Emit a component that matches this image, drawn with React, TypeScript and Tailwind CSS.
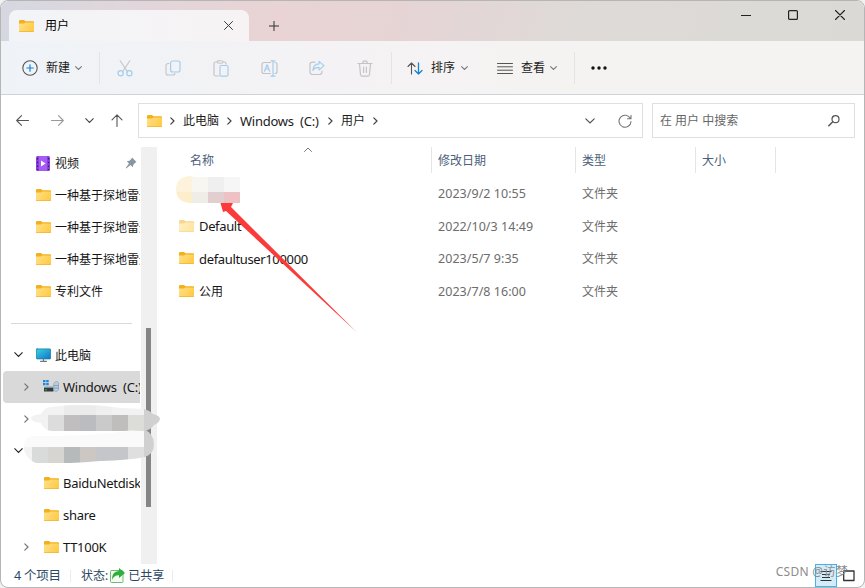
import React, { FunctionComponent, ReactNode } from "react";

interface IconProps {
  w: number;
  h: number;
  className?: string;
  children: ReactNode;
}

const Icon: FunctionComponent<IconProps> = ({ w, h, className, children }) => (
  <svg
    width={w}
    height={h}
    viewBox={`0 0 ${w} ${h}`}
    fill="none"
    strokeLinecap="round"
    strokeLinejoin="round"
    className={`shrink-0 ${className || ""}`}
  >
    {children}
  </svg>
);

const Folder = ({ className }: { className?: string }) => (
  <Icon w={15} h={12} className={className}>
    <path d="M0 1.2Q0 0 1.2 0H5l1.5 1.3H14q1 0 1 1V5H0z" fill="#f3b01c" />
    <path
      d="M0 3.6h5l1.4-1.2H14q1 0 1 1V11q0 1-1 1H1q-1 0-1-1z"
      fill="url(#folderFill)"
    />
    <path d="M.5 11.5h14" stroke="#efb736" strokeWidth=".8" />
    <defs>
      <linearGradient id="folderFill" x1="0" y1="2" x2="15" y2="12" gradientUnits="userSpaceOnUse">
        <stop stopColor="#ffe08a" />
        <stop offset="1" stopColor="#ffc93f" />
      </linearGradient>
    </defs>
  </Icon>
);

const ChevronDown = ({ w = 7, className }: { w?: number; className?: string }) => (
  <svg
    width={w}
    height={w * 0.6}
    viewBox="0 0 10 6"
    fill="none"
    stroke="currentColor"
    strokeWidth={w > 8 ? 1.2 : 1.5}
    strokeLinecap="round"
    className={`shrink-0 ${className || ""}`}
  >
    <path d="M.8.8 5 5 9.2.8" />
  </svg>
);

const ChevronRight = ({ className }: { className?: string }) => (
  <Icon w={5} h={8} className={className}>
    <path d="M.8.8 4 4 .8 7.2" stroke="currentColor" strokeWidth="1.2" />
  </Icon>
);

const TitleBar = () => (
  <div className="flex h-10 shrink-0 bg-[linear-gradient(100deg,#d5d8e1_0%,#e0d6db_14%,#e9d3d4_32%,#e6d4d5_46%,#dddad8_68%,#dbd9d6_100%)]">
    <div className="mt-[9px] ml-2 flex w-[240px] items-center rounded-t-lg bg-[linear-gradient(90deg,#f2f4f7,#f7f3f4)] pl-2.5 text-black">
      <Folder />
      <span className="ml-[11px]">用户</span>
      <Icon w={9} h={9} className="mr-4 ml-auto">
        <path d="M.5.5l8 8M8.5.5l-8 8" stroke="#3c3c3c" />
      </Icon>
    </div>
    <Icon w={10} h={10} className="mt-5 ml-5">
      <path d="M5 .3v9.4M.3 5h9.4" stroke="#333" />
    </Icon>
    <div className="mt-[9px] mr-[19px] ml-auto flex gap-[37px]">
      <Icon w={10} h={10}>
        <path d="M0 5.500h10" stroke="#222" />
      </Icon>
      <Icon w={10} h={10}>
        <rect x=".6" y=".6" width="8.8" height="8.8" rx="1" stroke="#222" strokeWidth="1.2" />
      </Icon>
      <Icon w={10} h={10}>
        <path d="M.5.5l9 9M9.5.5l-9 9" stroke="#222" strokeWidth="1.1" />
      </Icon>
    </div>
  </div>
);

const Divider = () => <div className="h-8 w-px shrink-0 bg-[#e4e4e5]" />;

const GRAY = "#c2c4c6";
const BLUE = "#a3cdee";

const fileActions: ReactNode[] = [
  <Icon w={16} h={17}>
    <path d="M3.2.8 10.6 12M12.8.8 5.4 12" stroke={GRAY} strokeWidth="1.1" />
    <circle cx="3.6" cy="13.2" r="2.6" stroke={BLUE} strokeWidth="1.2" />
    <circle cx="12.4" cy="13.2" r="2.6" stroke={BLUE} strokeWidth="1.2" />
  </Icon>,
  <Icon w={16} h={16}>
    <path d="M4 3.5H3a2 2 0 0 0-2 2V13a2 2 0 0 0 2 2h5a2 2 0 0 0 2-1.5" stroke={GRAY} strokeWidth="1.1" />
    <rect x="5.6" y="1" width="9.4" height="11" rx="2" stroke={BLUE} strokeWidth="1.2" />
  </Icon>,
  <Icon w={16} h={17}>
    <path d="M4 2H2.5Q1 2 1 3.5v11Q1 16 2.5 16H6M10 2h1.5Q13 2 13 3.5V4" stroke={GRAY} strokeWidth="1.2" />
    <rect x="4" y=".8" width="6" height="2.4" rx="1.2" stroke={GRAY} />
    <rect x="7" y="5.5" width="8" height="10.7" rx="1.5" stroke={BLUE} strokeWidth="1.2" />
  </Icon>,
  <Icon w={17} h={17}>
    <path d="M9.5 2.5H3a2 2 0 0 0-2 2v7a2 2 0 0 0 2 2h6.5M14 2.5a2 2 0 0 1 2 2v7a2 2 0 0 1-2 2" stroke={GRAY} strokeWidth="1.2" />
    <path d="M10 .8h4M12 .8v15.4M10 16.2h4M3.5 11.2 6.1 4.8l2.6 6.4M4.4 9h3.4" stroke={BLUE} strokeWidth="1.2" />
  </Icon>,
  <Icon w={16} h={16}>
    <path d="M6 2.2H3.5A2.5 2.5 0 0 0 1 4.7V12a2.5 2.5 0 0 0 2.5 2.5h7A2.5 2.5 0 0 0 13 12v-1" stroke={GRAY} strokeWidth="1.2" />
    <path d="M10 1.3 15 5.7 10 10V7.4C7 7.4 5.2 8.3 3.8 10.5 4.2 6.3 6.5 4 10 3.9z" stroke={BLUE} strokeWidth="1.1" />
  </Icon>,
  <Icon w={16} h={17}>
    <path d="M1 3.5h14M5.8 3a2.2 2.2 0 0 1 4.4 0M2.5 3.7l1 10.8q.2 1.700 1.800 1.700h5.400q1.600 0 1.800-1.700l1-10.800M6.600 7v5.500M9.400 7v5.500" stroke={GRAY} strokeWidth="1.2" />
  </Icon>,
];

const Toolbar = () => (
  <div className="flex h-[54px] shrink-0 items-center border-b border-[#cfd3d7] bg-[linear-gradient(90deg,#eff3f7,#f4f2f4_38%,#f5f3f2_60%,#f4f3f1)] pt-px text-[#1c1c1c]">
    <Icon w={16} h={16} className="ml-[21px]">
      <circle cx="8" cy="8" r="7.2" stroke="#555" strokeWidth="1.1" />
      <path d="M8 4.8v6.4M4.800 8h6.400" stroke="#1683d8" strokeWidth="1.2" />
    </Icon>
    <span className="ml-2">新建</span>
    <ChevronDown className="mr-[17px] ml-[5px] text-[#777]" />
    <Divider />
    <div className="ml-px flex">
      {fileActions.map((icon, i) => (
        <div key={i} className="flex w-12 justify-center">
          {icon}
        </div>
      ))}
    </div>
    <div className="w-0.5" />
    <Divider />
    <Icon w={16} h={13} className="ml-[15px]">
      <path d="M4.5 12V1M1 4.5 4.5 1 8 4.5" stroke="#555" strokeWidth="1.1" />
      <path d="M11.5 1v11M8 8.5l3.5 3.5L15 8.5" stroke="#1683d8" strokeWidth="1.3" />
    </Icon>
    <span className="ml-2">排序</span>
    <ChevronDown className="mr-[29px] ml-1.5 text-[#777]" />
    <Icon w={16} h={11}>
      <path d="M.5.5h15M.5 3.800h15M.5 7.200h15M.5 10.500h15" stroke="#555" />
    </Icon>
    <span className="ml-2">查看</span>
    <ChevronDown className="mr-[17px] ml-[5px] text-[#777]" />
    <Divider />
    <Icon w={16} h={4} className="ml-4">
      <circle cx="2" cy="2" r="1.7" fill="#111" />
      <circle cx="8" cy="2" r="1.7" fill="#111" />
      <circle cx="14" cy="2" r="1.7" fill="#111" />
    </Icon>
  </div>
);

const NavigationBar = () => (
  <div className="flex h-[51px] shrink-0 items-center text-[#1c1c1c]">
    <Icon w={13} h={11} className="ml-[15px]">
      <path d="M12.5 5.500H.8M5.500.7.7 5.500l4.800 4.800" stroke="#555" strokeWidth="1.1" />
    </Icon>
    <Icon w={13} h={11} className="ml-[22px]">
      <path d="M.5 5.500h11.700M7.500.7l4.800 4.800-4.800 4.800" stroke="#999" strokeWidth="1.1" />
    </Icon>
    <ChevronDown w={9} className="ml-[21px] text-[#444]" />
    <Icon w={12} h={13} className="ml-[17px]">
      <path d="M6 12.500V.8M1 5.800l5-5 5 5" stroke="#555" strokeWidth="1.1" />
    </Icon>
    <div className="ml-[15px] flex h-[35px] w-[505px] items-center border border-[#dfdfdf] pl-2">
      <Folder />
      <ChevronRight className="ml-2 text-[#444]" />
      <span className="ml-2">此电脑</span>
      <ChevronRight className="ml-2 text-[#444]" />
      <span className="ml-2 w-20 text-[13px] tracking-[-0.25px] whitespace-pre">Windows  (C:)</span>
      <ChevronRight className="ml-2 text-[#444]" />
      <span className="ml-2">用户</span>
      <ChevronRight className="ml-2 text-[#444]" />
      <ChevronDown w={10} className="ml-auto text-[#555]" />
      <Icon w={14} h={14} className="mr-2.5 ml-[23px]">
        <path d="M12.4 4.600A6 6 0 1 0 13 7.500M13 1.200v3.600H9.400" stroke="#777" strokeWidth="1.1" />
      </Icon>
    </div>
    <div className="ml-[9px] flex h-[35px] w-[203px] items-center border border-[#dfdfdf] pl-[7px] text-[#666]">
      <span className="pt-px">在 用户 中搜索</span>
      <Icon w={12} h={12} className="mr-3.5 ml-auto">
        <circle cx="7.5" cy="4.200" r="3.500" stroke="#555" strokeWidth="1.2" />
        <path d="M4.8 6.800.8 10.800" stroke="#555" strokeWidth="1.500" />
      </Icon>
    </div>
  </div>
);

const VideoIcon = () => (
  <Icon w={14} h={15}>
    <rect width="14" height="15" rx="1.5" fill="#8b3fe0" />
    <rect x="3" width="8" height="15" fill="#a45cf2" />
    <path d="M5 4.500v6l4.500-3z" fill="#fff" />
    <path d="M1.5 2v12M12.5 2v12" stroke="#3d1673" strokeDasharray="1.5 2.2" strokeLinecap="butt" strokeWidth="1.2" />
  </Icon>
);

const PinIcon = () => (
  <Icon w={12} h={12} className="mr-[3px] ml-auto">
    <path d="M7 .5 11.500 5 10.200 5.800 8.300 7.700 7.900 10.300 5.500 8 1.200 11.400.7 10.900 4 6.600 1.800 4.200 4.500 3.800 6.300 1.900z" fill="#8795a1" />
  </Icon>
);

const ComputerIcon = () => (
  <Icon w={15} h={14}>
    <rect x=".4" y=".9" width="14.2" height="10" rx=".7" fill="url(#screen)" stroke="#1a7ca5" strokeWidth=".8" />
    <path d="M7.5 11v2M4.500 13.300h6" stroke="#6b7780" strokeWidth="1.2" />
    <defs>
      <linearGradient id="screen" x1="0" y1="0" x2="1" y2="1">
        <stop stopColor="#36d5e6" />
        <stop offset="1" stopColor="#1272c2" />
      </linearGradient>
    </defs>
  </Icon>
);

const DriveIcon = () => (
  <Icon w={16} h={14} className="-mt-0.5">
    <path d="M0 1h2.500v2.300H0zM3.200 1h2.500v2.300H3.200zM0 4h2.500v2.300H0zM3.200 4h2.500v2.300H3.200z" fill="#1d88dd" />
    <path d="M1 8.500h9.500v4H1z" fill="#333b40" />
    <path d="M2 8h8" stroke="#8f999f" />
    <circle cx="3" cy="10.8" r=".8" fill="#3ec34b" />
    <path d="M11 4.200Q13 1 15.500 3.500V11q-2.500 3-4.500.5z" fill="#b9cfde" stroke="#8ba9bf" strokeWidth=".8" />
    <path d="M11 6.500h4.500M11 9h4.500" stroke="#7498b4" strokeWidth=".8" />
  </Icon>
);

const quickAccess = ["一种基于探地雷达", "一种基于探地雷达", "一种基于探地雷达", "专利文件"];

const Mosaic = () => (
  <svg className="absolute top-[257px] left-[23px]" width="140" height="62" viewBox="24 404 140 62">
    <defs>
      <clipPath id="strokeTop">
        <path d="M31 418q0-3 10-4 3-6 10-7 14-2 30-2 20 0 40 3l23 1q5 1 9 5 7 2 7 5-1 4-6 6-3 5-10 6-14-1-20 0H52q-8-1-11-8-10-1-10-5z" />
      </clipPath>
      <clipPath id="strokeBottom">
        <path d="M24 444q2-8 10-8 40 0 65-2 25-2 45-5 10 5 10 15 0 10-9 13-15 3-45 4-15 1.500-30 2H36Q28 461 24 450z" />
      </clipPath>
    </defs>
    <g clipPath="url(#strokeBottom)">
      <path fill="#fafafa" d="M24 428h120v20H24z" />
      <path fill="#f3f3f3" d="M24 447h8v18h-8z" />
      <path fill="#d9dbda" d="M32 447h16v18H32z" />
      <path fill="#d6d5d2" d="M48 447h16v18H48z" />
      <path fill="#b7baba" d="M64 447h16v18H64z" />
      <path fill="#cdc7c3" d="M80 447h16v18H80z" />
      <path fill="#c4c6ca" d="M96 447h32v18H96z" />
      <path fill="#dfdfdf" d="M128 447h16v18h-16z" />
      <path fill="#d0d0d0" d="M144 428h12v37h-12z" />
    </g>
    <g clipPath="url(#strokeTop)">
      <path fill="#f2f2f2" d="M30 404h114v28H30z" />
      <path fill="#ebebeb" d="M64 404h16v11H64zM80 404h16v11H80z" />
      <path fill="#efefef" d="M96 404h16v11H96z" />
      <path fill="#dcdcdc" d="M48 415h16v17H48z" />
      <path fill="#c0bebe" d="M64 415h16v17H64z" />
      <path fill="#bbbcbf" d="M80 415h16v17H80z" />
      <path fill="#cacaca" d="M96 415h16v17H96z" />
      <path fill="#c0bebc" d="M112 415h16v17h-16z" />
      <path fill="#dcdcd9" d="M128 415h16v17h-16z" />
      <path fill="#d0d0d0" d="M144 404h18v28h-18z" />
    </g>
  </svg>
);

const Sidebar = () => (
  <div className="relative flex w-[156px] shrink-0 text-[#161616]">
    <div className="w-[139px] overflow-hidden whitespace-nowrap">
      <div className="flex h-8 items-center gap-[5px] pl-[35px]">
        <VideoIcon />
        <span className="pt-px">视频</span>
        <PinIcon />
      </div>
      {quickAccess.map((name, i) => (
        <div key={i} className="flex h-8 items-center gap-1 pl-[35px]">
          <Folder />
          <span className="pt-0.5">{name}</span>
        </div>
      ))}
      <div className="flex h-8 items-center pl-2.5">
        <div className="h-px w-[121px] bg-[#d9d9d9]" />
      </div>
      <div className="flex h-8 items-center pl-[13px]">
        <ChevronDown w={9} className="mr-[13px] text-[#222]" />
        <ComputerIcon />
        <span className="ml-1 pt-0.5">此电脑</span>
      </div>
      <div className="ml-0.5 flex h-8 items-center rounded-l-sm bg-[#d9d9d9] pl-[21px]">
        <ChevronRight className="mr-3.5 text-[#777]" />
        <DriveIcon />
        <span className="ml-1 text-[13px] tracking-[-0.25px] whitespace-pre">Windows  (C:)</span>
      </div>
      <div className="flex h-8 items-center pl-[23px]">
        <ChevronRight className="text-[#777]" />
      </div>
      <div className="flex h-8 items-center pl-[13px]">
        <ChevronDown w={9} className="text-[#222]" />
      </div>
      {["BaiduNetdisk", "share", "TT100K"].map((name) => (
        <div key={name} className="flex h-8 items-center pl-[23px] text-[13px]">
          <ChevronRight
            className={name === "TT100K" ? "text-[#777]" : "invisible"}
          />
          <Folder className="ml-[15px]" />
          <span className="ml-1 tracking-[-0.3px]">{name}</span>
        </div>
      ))}
    </div>
    <div className="ml-px w-4 bg-[#f0f0f0] pt-[181px] pl-[5px]">
      <div className="h-[179px] w-[5px] bg-[#858585]" />
    </div>
    <Mosaic />
  </div>
);

const files = [
  { name: "", date: "2023/9/2 10:55" },
  { name: "Default", date: "2022/10/3 14:49", faded: true },
  { name: "defaultuser100000", date: "2023/5/7 9:35" },
  { name: "公用", date: "2023/7/8 16:00" },
];

const BlurredName = () => (
  <svg width="64" height="27" viewBox="0 0 64 27" className="mb-2 -ml-[3px]">
    <defs>
      <clipPath id="nameShape">
        <path d="M14 0q4 1 8 1h42v26H14Q0 26 0 13 0 1 14 0z" />
      </clipPath>
    </defs>
    <g clipPath="url(#nameShape)">
      <path fill="#fdf3dc" d="M0 0h16v16H0z" />
      <path fill="#fdeecb" d="M0 16h16v11H0z" />
      <path fill="#f7f6f1" d="M16 0h16v16H16z" />
      <path fill="#efede6" d="M16 16h16v11H16z" />
      <path fill="#efeff0" d="M32 0h16v16H32z" />
      <path fill="#e2cdcf" d="M32 16h16v11H32z" />
      <path fill="#f6f6f7" d="M48 0h16v16H48z" />
      <path fill="#eec2c4" d="M48 16h16v11H48z" />
    </g>
  </svg>
);

const FileList = () => (
  <div className="relative grow">
    <div className="flex h-[26px] text-[#4c607a]">
      <div className="flex w-[274px] items-center pt-px pl-[33px]">名称</div>
      <div className="flex w-36 items-center border-l border-[#e5e5e5] pt-px pl-[6px]">修改日期</div>
      <div className="flex w-[120px] items-center border-l border-[#e5e5e5] pt-px pl-[6px]">类型</div>
      <div className="flex w-20 items-center border-l border-[#e5e5e5] pt-px pl-[6px]">大小</div>
      <div className="border-l border-[#e5e5e5]" />
    </div>
    <div className="mt-1">
      {files.map((file) => (
        <div key={file.date} className="flex h-[32.75px] items-center text-[#6d6d6d]">
          <div className="flex w-[275px] items-center pl-[22px] text-[#161616]">
            {file.name ? (
              <>
                <Folder className={file.faded ? "-mt-px opacity-50" : "-mt-px"} />
                <span className={file.name === "公用" ? "ml-[5px] pt-px" : "ml-[5px] text-[13px] tracking-[-0.35px]"}>
                  {file.name}
                </span>
              </>
            ) : (
              <BlurredName />
            )}
          </div>
          <span className="w-36 pt-px pl-1.5 text-[12.5px] tracking-[0.04px]">{file.date}</span>
          <span className="pt-px pl-1.5">文件夹</span>
        </div>
      ))}
    </div>
    <Icon w={8} h={5} className="absolute top-0 left-[147px]">
      <path d="M.5 4.500 4 1l3.500 3.500" stroke="#777" />
    </Icon>
    {/* pointer to the hidden user folder */}
    <svg className="absolute top-[55px] left-[62px]" width="140" height="132" viewBox="219 202 140 132">
      <path d="M220.5 203H233l-2 4 126 125.500L226 211l-3 1z" fill="#fb3b39" />
    </svg>
  </div>
);

const StatusBar = () => (
  <div className="relative flex h-[23px] shrink-0 items-center text-[#2b4763]">
    <span className="ml-[13px] w-[56px] text-[12.5px] tracking-[-0.2px]">4 个项目</span>
    <div className="h-3 w-px bg-[#ececec]" />
    <span className="ml-2.5">状态:</span>
    <Icon w={15} h={15} className="ml-0.5">
      <rect x=".5" y="2.500" width="12.500" height="12" rx="1" fill="#f3fbf2" stroke="#72b978" />
      <path d="M9 0l6 5-6 5V7.300Q4 7 2 12 1.500 3.500 9 3z" fill="#2fae3b" />
    </Icon>
    <span className="ml-[3px]">已共享</span>
    <div className="ml-2 h-3 w-px bg-[#ececec]" />
    <div className="mr-[9px] ml-auto flex items-center gap-[5px]">
      <div className="flex h-[23px] w-[22px] items-center justify-center border border-[#45b4ea] bg-[#d3ecf9]">
        <Icon w={12} h={12}>
          <path d="M.5 1.500h11M2 4.500h8M2 7.500h8M.5 10.500h11" stroke="#333" strokeLinecap="butt" />
        </Icon>
      </div>
      <Icon w={13} h={12}>
        <rect x="1.7" y="1" width="10.3" height="9.5" stroke="#333" strokeWidth="1.3" />
      </Icon>
    </div>
    <span className="absolute top-0 right-4 text-xs tracking-[0.3px] whitespace-nowrap text-[#8c8c8c]">
      CSDN @访梦
    </span>
  </div>
);

const App: FunctionComponent = () => (
  <div className="h-[588px] w-[865px] bg-[#f1f1f1] font-['Noto_Sans','Noto_Sans_CJK_SC',sans-serif] text-xs leading-4">
    <div className="flex h-full flex-col overflow-hidden rounded-lg border border-[#b5b5b5] bg-white">
      <TitleBar />
      <Toolbar />
      <NavigationBar />
      <div className="flex min-h-0 grow pt-px">
        <Sidebar />
        <FileList />
      </div>
      <StatusBar />
    </div>
  </div>
);

export default App;
